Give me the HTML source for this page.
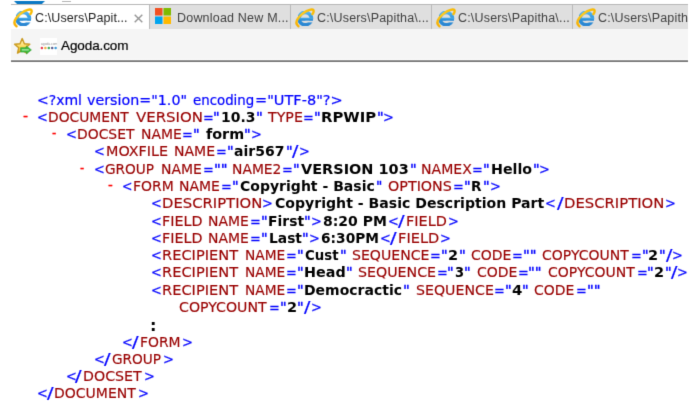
<!DOCTYPE html>
<html><head><meta charset="utf-8"><title>XML</title>
<style>
html,body{margin:0;padding:0;background:#fff;}
body{width:694px;height:407px;position:relative;overflow:hidden;font-family:"Liberation Sans",sans-serif;}
#page{position:absolute;left:0;top:0;width:694px;height:407px;background:#fff;filter:url(#soft);}
#chrome{position:absolute;left:11px;top:4px;width:677px;height:58px;}
#tabs{position:absolute;left:0;top:0;width:677px;height:25px;background:#dfdfdf;border-top:1px solid #b8b8b8;box-sizing:border-box;overflow:hidden;}
.tab{position:absolute;top:0;height:24px;box-sizing:border-box;border-left:1px solid #bababa;font-size:12.5px;color:#404040;white-space:pre;overflow:hidden;}
.tab .tx{position:absolute;top:6px;line-height:15px;will-change:transform;transform:translateZ(0);}
.tab .ic{position:absolute;top:3.6px;overflow:visible;}
.tab.act{background:#fff;border-left:none;color:#1e1e1e;}
#bm{position:absolute;left:0;top:25px;width:677px;height:29.6px;background:#f5f5f5;}
#bline{position:absolute;left:0;top:56px;width:677px;height:2.2px;background:linear-gradient(#b0b0b0,#808080 45%,#6c6c6c);}
#bmtx{-webkit-text-stroke:0.2px #000;will-change:transform;transform:translateZ(0);position:absolute;left:50px;top:9px;letter-spacing:-0.1px;font-size:13.5px;color:#000;line-height:16px;white-space:pre;}
#fav{position:absolute;left:29px;top:9px;width:17px;height:17px;background:#fff;}
#fav span{position:absolute;left:0.7px;top:4.4px;font-size:3.3px;line-height:4px;color:#909090;white-space:pre;will-change:transform;transform:translateZ(0);}
#fav i{position:absolute;top:8.9px;width:2.4px;height:2.4px;border-radius:50%;}
#xml{position:absolute;left:0;top:0;transform:translateZ(0);font-family:"DejaVu Sans","Liberation Sans",sans-serif;font-size:13.5px;line-height:17px;color:#000;}
.l{position:absolute;left:0;white-space:pre;height:17px;width:694px;}
.l span,.l b{position:absolute;top:0;transform-origin:0 50%;}
.m{color:#0000ff;-webkit-text-stroke:0.2px #0000ff;word-spacing:1.2px;}
.q{-webkit-text-stroke:0.35px #0000ff;}
.t{color:#990000;-webkit-text-stroke:0.15px #990000;word-spacing:1.2px;}
.d{color:#ff0000;-webkit-text-stroke:0.3px #ff0000;}
b{font-weight:bold;color:#000;}
</style></head><body>
<svg width="0" height="0" style="position:absolute">
 <defs>
  <filter id="soft" x="0" y="0" width="694" height="407" filterUnits="userSpaceOnUse" color-interpolation-filters="sRGB"><feConvolveMatrix order="3" kernelMatrix="0 1 0 1 6 1 0 1 0" divisor="10" edgeMode="duplicate" preserveAlpha="false"/></filter>
  <linearGradient id="eg" x1="0" y1="0" x2="0" y2="1"><stop offset="0" stop-color="#55b4ee"/><stop offset="0.5" stop-color="#2f95dc"/><stop offset="1" stop-color="#2a86d2"/></linearGradient>
  <linearGradient id="rg" x1="0" y1="1" x2="1" y2="0"><stop offset="0" stop-color="#f5ae00"/><stop offset="0.5" stop-color="#ffcc22"/><stop offset="1" stop-color="#f7b800"/></linearGradient>
  <clipPath id="ec"><circle cx="9.2" cy="9.6" r="8.1"/></clipPath>
  <symbol id="ie" viewBox="0 0 18 18" overflow="visible">
   <mask id="em"><rect x="-2" y="-2" width="24" height="24" fill="#fff"/><rect x="9.2" y="11.8" width="10" height="1.6" fill="#000"/></mask>
   <g mask="url(#em)">
    <circle cx="9.2" cy="9.6" r="6.25" fill="none" stroke="url(#eg)" stroke-width="3.6"/>
    <rect x="4" y="8.7" width="13" height="3.1" fill="url(#eg)"/>
   </g>
   <path d="M2.5 17.3 C0.2 15.6 -0.5 12.8 2.3 9 C5.1 5.2 9.6 2 13.7 0.8 C16.5 0 18 0.7 17.6 2.7 C17.4 3.6 17 4.4 16.4 5.1" fill="none" stroke="url(#rg)" stroke-width="2.4" stroke-linecap="round"/>
  </symbol>
 </defs>
</svg>
<div id="page">
<div id="top1" style="position:absolute;left:14px;top:0;width:31px;height:4px;background:#0a78c4;clip-path:polygon(0 25%,100% 25%,90% 100%,10% 100%);"></div>
<div style="position:absolute;left:62px;top:1px;width:9px;height:1px;background:#b4b4b4;"></div>
<div id="chrome">
 <div id="tabs">
  <div class="tab act" style="left:0;width:138px;"><svg class="ic" style="left:3px" width="18" height="18"><use href="#ie"/></svg><span class="tx" style="left:23.5px;letter-spacing:0.1px">C:\Users\Papit...</span><svg style="position:absolute;left:123px;top:9px" width="9" height="9" viewBox="0 0 9 9"><path d="M0.7 0.7 L8.3 8.3 M8.3 0.7 L0.7 8.3" stroke="#939393" stroke-width="1.35" fill="none"/></svg></div>
  <div class="tab" style="left:138px;width:141px;"><svg class="ic" style="left:5px;top:3px" width="16" height="16" viewBox="0 0 16 16"><rect x="0" y="0" width="7.5" height="7.5" fill="#f25022"/><rect x="8.5" y="0" width="7.5" height="7.5" fill="#7fba00"/><rect x="0" y="8.5" width="7.5" height="7.5" fill="#00a4ef"/><rect x="8.5" y="8.5" width="7.5" height="7.5" fill="#ffb900"/></svg><span class="tx" style="left:26.5px;letter-spacing:0.2px">Download New M...</span></div>
  <div class="tab" style="left:279px;width:141px;"><svg class="ic" style="left:5px" width="18" height="18"><use href="#ie"/></svg><span class="tx" style="left:25.5px;letter-spacing:0.18px">C:\Users\Papitha\...</span></div>
  <div class="tab" style="left:420px;width:141px;"><svg class="ic" style="left:5px" width="18" height="18"><use href="#ie"/></svg><span class="tx" style="left:25.5px;letter-spacing:0.18px">C:\Users\Papitha\...</span></div>
  <div class="tab" style="left:561px;width:116px;"><svg class="ic" style="left:4px" width="18" height="18"><use href="#ie"/></svg><span class="tx" style="left:25px;letter-spacing:0.18px">C:\Users\Papitha\...</span></div>
 </div>
 <div id="bm">
  <svg style="position:absolute;left:2px;top:8px" width="19" height="18" viewBox="0 0 19 18">
   <defs><linearGradient id="sg" x1="0" y1="0" x2="0" y2="1"><stop offset="0" stop-color="#fffbe0"/><stop offset="0.55" stop-color="#fbd95a"/><stop offset="1" stop-color="#eeb020"/></linearGradient></defs>
   <path d="M9.2 1.6 L11.4 6.7 L16.8 7.2 L12.7 10.8 L13.9 16.1 L9.2 13.3 L4.5 16.1 L5.7 10.8 L1.6 7.2 L7 6.7 Z" fill="url(#sg)" stroke="#c9991f" stroke-width="1.4" stroke-linejoin="round"/>
   <path d="M7.6 10.7 H13.4 V8.9 L18.4 12.9 L13.4 17 V15.1 H7.6 Z" fill="#3dbb3d" stroke="#2fa12f" stroke-width="0.6" stroke-linejoin="round"/>
   <path d="M8.8 12.9 H15.8" stroke="#c4f0bc" stroke-width="1.1" fill="none"/>
  </svg>
  <div id="fav"><span>agoda.com</span><svg style="position:absolute;left:0;top:0" width="17" height="17" viewBox="0 0 17 17"><circle cx="1.9" cy="10.1" r="1.25" fill="#e8384f"/><circle cx="5.4" cy="10.1" r="1.25" fill="#f0b040"/><circle cx="8.8" cy="10.1" r="1.25" fill="#40a860"/><circle cx="12.2" cy="10.1" r="1.25" fill="#5a5a8c"/><circle cx="15.6" cy="10.1" r="1.25" fill="#3a9ad8"/></svg></div>
  <span id="bmtx">Agoda.com</span>
 </div>
 <div id="bline"></div>
</div>
<div id="xml">
<div class="l" style="top:92.0px"><span class="m" style="left:36.9px;transform:scaleX(1.038)">&lt;?xml</span> <span class="m" style="left:86.9px;transform:scaleX(1.057)">version="1.0"</span> <span class="m" style="left:192.9px;transform:scaleX(0.988)">encoding</span><span class="m" style="left:254.9px;transform:scaleX(1.075)">="UTF-8"?&gt;</span></div>
<div class="l" style="top:109.0px"><span class="d" style="left:22.7px;transform:scaleX(1.040) translateY(-0.7px)">-</span> <span class="m" style="left:36.9px;transform:scaleX(0.956)">&lt;</span><span class="t" style="left:47.8px;transform:scaleX(1.024)">DOCUMENT</span> <span class="t" style="left:135.9px;transform:scaleX(1.109)">VERSION</span><span class="m" style="left:202.7px;transform:scaleX(0.956) scaleY(1.15)">=</span><span class="m q" style="left:213.3px;transform:scaleX(1.075)">"</span><b style="left:220.8px;transform:scaleX(1.034)">10.3</b><span class="m q" style="left:255.9px;transform:scaleX(1.100)">"</span> <span class="t" style="left:268.0px;transform:scaleX(1.053)">TYPE</span><span class="m" style="left:302.7px;transform:scaleX(0.956) scaleY(1.15)">=</span><span class="m q" style="left:314.2px;transform:scaleX(1.075)">"</span><b style="left:320.5px;transform:scaleX(1.102)">RPWIP</b><span class="m q" style="left:376.9px;transform:scaleX(1.075)">"</span><span class="m" style="left:383.4px;transform:scaleX(0.956)">&gt;</span></div>
<div class="l" style="top:126.0px"><span class="d" style="left:51.5px;transform:scaleX(0.880) translateY(-0.7px)">-</span> <span class="m" style="left:65.5px;transform:scaleX(0.967)">&lt;</span><span class="t" style="left:76.5px;transform:scaleX(1.030)">DOCSET</span> <span class="t" style="left:141.2px;transform:scaleX(1.032)">NAME</span><span class="m" style="left:182.2px;transform:scaleX(0.956) scaleY(1.15)">=</span><span class="m q" style="left:193.4px;transform:scaleX(1.075)">"</span> <b style="left:205.8px;transform:scaleX(1.063)">form</b><span class="m q" style="left:243.7px;transform:scaleX(1.075)">"</span><span class="m" style="left:250.5px;transform:scaleX(0.956)">&gt;</span></div>
<div class="l" style="top:143.0px"><span class="m" style="left:93.8px;transform:scaleX(0.956)">&lt;</span><span class="t" style="left:105.8px;transform:scaleX(1.063)">MOXFILE</span> <span class="t" style="left:173.9px;transform:scaleX(1.040)">NAME</span><span class="m" style="left:215.7px;transform:scaleX(0.956) scaleY(1.15)">=</span><span class="m q" style="left:226.6px;transform:scaleX(1.075)">"</span><b style="left:234.3px;transform:scaleX(1.038)">air567</b><span class="m q" style="left:285.5px;transform:scaleX(1.075)">"</span><span class="m" style="left:292.1px;transform:scaleX(1.400) translateY(0.5px) scaleY(1.17)">/</span><span class="m" style="left:298.6px;transform:scaleX(0.956)">&gt;</span></div>
<div class="l" style="top:161.0px"><span class="d" style="left:80.1px;transform:scaleX(0.860) translateY(-0.7px)">-</span> <span class="m" style="left:93.5px;transform:scaleX(0.956)">&lt;</span><span class="t" style="left:105.2px;transform:scaleX(1.013)">GROUP</span> <span class="t" style="left:160.8px;transform:scaleX(1.035)">NAME</span><span class="m" style="left:203.0px;transform:scaleX(0.956) scaleY(1.15)">=</span><span class="m q" style="left:214.3px;transform:scaleX(1.097)">""</span> <span class="t" style="left:232.3px;transform:scaleX(1.028)">NAME2</span><span class="m" style="left:282.4px;transform:scaleX(0.956) scaleY(1.15)">=</span><span class="m q" style="left:293.0px;transform:scaleX(1.075)">"</span><b style="left:300.7px;transform:scaleX(1.072)">VERSION 103</b><span class="m q" style="left:409.7px;transform:scaleX(1.075)">"</span> <span class="t" style="left:420.9px;transform:scaleX(1.042)">NAMEX</span><span class="m" style="left:472.2px;transform:scaleX(0.956) scaleY(1.15)">=</span><span class="m q" style="left:483.3px;transform:scaleX(1.075)">"</span><b style="left:490.5px;transform:scaleX(1.055)">Hello</b><span class="m q" style="left:532.6px;transform:scaleX(1.075)">"</span><span class="m" style="left:539.1px;transform:scaleX(0.956)">&gt;</span></div>
<div class="l" style="top:178.0px"><span class="d" style="left:108.3px;transform:scaleX(0.980) translateY(-0.7px)">-</span> <span class="m" style="left:122.4px;transform:scaleX(0.922)">&lt;</span><span class="t" style="left:133.0px;transform:scaleX(1.033)">FORM</span> <span class="t" style="left:179.0px;transform:scaleX(1.035)">NAME</span><span class="m" style="left:220.9px;transform:scaleX(0.956) scaleY(1.15)">=</span><span class="m q" style="left:231.5px;transform:scaleX(1.075)">"</span><b style="left:239.8px;transform:scaleX(1.039)">Copyright - Basic</b><span class="m q" style="left:375.7px;transform:scaleX(1.025)">"</span> <span class="t" style="left:388.0px;transform:scaleX(1.060)">OPTIONS</span><span class="m" style="left:453.1px;transform:scaleX(0.956) scaleY(1.15)">=</span><span class="m q" style="left:464.0px;transform:scaleX(1.075)">"</span><b style="left:471.3px;transform:scaleX(1.010)">R</b><span class="m q" style="left:482.7px;transform:scaleX(1.075)">"</span><span class="m" style="left:489.5px;transform:scaleX(0.956)">&gt;</span></div>
<div class="l" style="top:195.0px"><span class="m" style="left:151.2px;transform:scaleX(0.956)">&lt;</span><span class="t" style="left:161.8px;transform:scaleX(1.097)">DESCRIPTION</span><span class="m" style="left:262.2px;transform:scaleX(0.956)">&gt;</span><b style="left:275.3px;transform:scaleX(1.043)">Copyright - Basic Description Part</b><span class="m" style="left:545.0px;transform:scaleX(0.956)">&lt;</span><span class="m" style="left:556.9px;transform:scaleX(1.440) translateY(0.5px) scaleY(1.17)">/</span><span class="t" style="left:563.5px;transform:scaleX(1.098)">DESCRIPTION</span><span class="m" style="left:664.5px;transform:scaleX(0.956)">&gt;</span></div>
<div class="l" style="top:213.0px"><span class="m" style="left:151.2px;transform:scaleX(0.956)">&lt;</span><span class="t" style="left:161.8px;transform:scaleX(1.063)">FIELD</span> <span class="t" style="left:208.0px;transform:scaleX(1.032)">NAME</span><span class="m" style="left:250.0px;transform:scaleX(0.956) scaleY(1.15)">=</span><span class="m q" style="left:260.6px;transform:scaleX(1.075)">"</span><b style="left:267.9px;transform:scaleX(1.031)">First</b><span class="m q" style="left:304.4px;transform:scaleX(1.075)">"</span><span class="m" style="left:310.9px;transform:scaleX(0.956)">&gt;</span><b style="left:323.2px;transform:scaleX(1.036)">8:20 PM</b><span class="m" style="left:387.7px;transform:scaleX(0.956)">&lt;</span><span class="m" style="left:398.2px;transform:scaleX(1.440) translateY(0.5px) scaleY(1.17)">/</span><span class="t" style="left:405.7px;transform:scaleX(1.073)">FIELD</span><span class="m" style="left:448.2px;transform:scaleX(0.956)">&gt;</span></div>
<div class="l" style="top:230.0px"><span class="m" style="left:151.2px;transform:scaleX(0.956)">&lt;</span><span class="t" style="left:161.8px;transform:scaleX(1.063)">FIELD</span> <span class="t" style="left:208.0px;transform:scaleX(1.032)">NAME</span><span class="m" style="left:250.0px;transform:scaleX(0.956) scaleY(1.15)">=</span><span class="m q" style="left:260.9px;transform:scaleX(1.075)">"</span><b style="left:268.5px;transform:scaleX(1.024)">Last</b><span class="m q" style="left:302.1px;transform:scaleX(1.075)">"</span><span class="m" style="left:308.6px;transform:scaleX(0.956)">&gt;</span><b style="left:321.0px;transform:scaleX(1.020)">6:30PM</b><span class="m" style="left:379.9px;transform:scaleX(0.956)">&lt;</span><span class="m" style="left:390.1px;transform:scaleX(1.440) translateY(0.5px) scaleY(1.17)">/</span><span class="t" style="left:397.6px;transform:scaleX(1.082)">FIELD</span><span class="m" style="left:440.4px;transform:scaleX(0.956)">&gt;</span></div>
<div class="l" style="top:247.0px"><span class="m" style="left:151.2px;transform:scaleX(0.956)">&lt;</span><span class="t" style="left:162.1px;transform:scaleX(1.082)">RECIPIENT</span> <span class="t" style="left:244.6px;transform:scaleX(1.019)">NAME</span><span class="m" style="left:285.8px;transform:scaleX(0.956) scaleY(1.15)">=</span><span class="m q" style="left:296.7px;transform:scaleX(1.075)">"</span><b style="left:304.7px;transform:scaleX(0.987)">Cust</b><span class="m q" style="left:340.0px;transform:scaleX(1.075)">"</span> <span class="t" style="left:352.1px;transform:scaleX(1.044)">SEQUENCE</span><span class="m" style="left:430.0px;transform:scaleX(0.956) scaleY(1.15)">=</span><span class="m q" style="left:440.9px;transform:scaleX(1.075)">"</span><b style="left:448.1px;transform:scaleX(1.075)">2</b><span class="m q" style="left:458.5px;transform:scaleX(1.100)">"</span> <span class="t" style="left:470.8px;transform:scaleX(1.038)">CODE</span><span class="m" style="left:511.7px;transform:scaleX(0.956) scaleY(1.15)">=</span><span class="m q" style="left:522.6px;transform:scaleX(1.097)">""</span> <span class="t" style="left:542.1px;transform:scaleX(1.036)">COPYCOUNT</span><span class="m" style="left:631.0px;transform:scaleX(0.956) scaleY(1.15)">=</span><span class="m q" style="left:641.9px;transform:scaleX(1.075)">"</span><b style="left:648.4px;transform:scaleX(1.075)">2</b><span class="m q" style="left:659.2px;transform:scaleX(1.075)">"</span><span class="m" style="left:665.5px;transform:scaleX(1.400) translateY(0.5px) scaleY(1.17)">/</span><span class="m" style="left:672.0px;transform:scaleX(0.956)">&gt;</span></div>
<div class="l" style="top:264.0px"><span class="m" style="left:151.2px;transform:scaleX(0.956)">&lt;</span><span class="t" style="left:162.1px;transform:scaleX(1.082)">RECIPIENT</span> <span class="t" style="left:244.6px;transform:scaleX(1.019)">NAME</span><span class="m" style="left:285.8px;transform:scaleX(0.956) scaleY(1.15)">=</span><span class="m q" style="left:296.7px;transform:scaleX(1.075)">"</span><b style="left:303.6px;transform:scaleX(1.062)">Head</b><span class="m q" style="left:345.8px;transform:scaleX(1.075)">"</span> <span class="t" style="left:357.8px;transform:scaleX(1.052)">SEQUENCE</span><span class="m" style="left:436.7px;transform:scaleX(0.956) scaleY(1.15)">=</span><span class="m q" style="left:447.2px;transform:scaleX(1.075)">"</span><b style="left:454.9px;transform:scaleX(0.967)">3</b><span class="m q" style="left:464.3px;transform:scaleX(1.075)">"</span> <span class="t" style="left:476.6px;transform:scaleX(1.038)">CODE</span><span class="m" style="left:518.1px;transform:scaleX(0.956) scaleY(1.15)">=</span><span class="m q" style="left:528.4px;transform:scaleX(1.097)">""</span> <span class="t" style="left:547.9px;transform:scaleX(1.036)">COPYCOUNT</span><span class="m" style="left:636.5px;transform:scaleX(0.956) scaleY(1.15)">=</span><span class="m q" style="left:647.4px;transform:scaleX(1.075)">"</span><b style="left:653.9px;transform:scaleX(1.075)">2</b><span class="m q" style="left:664.5px;transform:scaleX(1.075)">"</span><span class="m" style="left:670.9px;transform:scaleX(1.400) translateY(0.5px) scaleY(1.17)">/</span><span class="m" style="left:677.4px;transform:scaleX(0.956)">&gt;</span></div>
<div class="l" style="top:282.0px"><span class="m" style="left:151.2px;transform:scaleX(0.956)">&lt;</span><span class="t" style="left:162.1px;transform:scaleX(1.082)">RECIPIENT</span> <span class="t" style="left:244.6px;transform:scaleX(1.019)">NAME</span><span class="m" style="left:285.8px;transform:scaleX(0.956) scaleY(1.15)">=</span><span class="m q" style="left:296.7px;transform:scaleX(1.075)">"</span><b style="left:303.7px;transform:scaleX(1.036)">Democractic</b><span class="m q" style="left:402.8px;transform:scaleX(1.100)">"</span> <span class="t" style="left:415.5px;transform:scaleX(1.049)">SEQUENCE</span><span class="m" style="left:493.9px;transform:scaleX(0.956) scaleY(1.15)">=</span><span class="m q" style="left:505.0px;transform:scaleX(1.075)">"</span><b style="left:512.1px;transform:scaleX(1.100)">4</b><span class="m q" style="left:522.3px;transform:scaleX(1.075)">"</span> <span class="t" style="left:534.3px;transform:scaleX(1.035)">CODE</span><span class="m" style="left:575.7px;transform:scaleX(0.956) scaleY(1.15)">=</span><span class="m q" style="left:586.9px;transform:scaleX(1.097)">""</span></div>
<div class="l" style="top:299.0px"><span class="t" style="left:179.0px;transform:scaleX(1.048)">COPYCOUNT</span><span class="m" style="left:268.8px;transform:scaleX(0.956) scaleY(1.15)">=</span><span class="m q" style="left:279.9px;transform:scaleX(1.075)">"</span><b style="left:286.6px;transform:scaleX(1.075)">2</b><span class="m q" style="left:297.2px;transform:scaleX(1.075)">"</span><span class="m" style="left:304.1px;transform:scaleX(1.400) translateY(0.5px) scaleY(1.17)">/</span><span class="m" style="left:310.6px;transform:scaleX(0.956)">&gt;</span></div>
<div class="l" style="top:316.0px"><b style="left:149.9px;transform:scaleX(1.200) translateY(1px) scale(1.0,1.22)">:</b></div>
<div class="l" style="top:334.0px"><span class="m" style="left:122.2px;transform:scaleX(0.956)">&lt;</span><span class="m" style="left:131.9px;transform:scaleX(1.440) translateY(0.5px) scaleY(1.17)">/</span><span class="t" style="left:139.5px;transform:scaleX(1.030)">FORM</span><span class="m" style="left:181.8px;transform:scaleX(0.967)">&gt;</span></div>
<div class="l" style="top:351.0px"><span class="m" style="left:93.9px;transform:scaleX(0.956)">&lt;</span><span class="m" style="left:103.6px;transform:scaleX(1.440) translateY(0.5px) scaleY(1.17)">/</span><span class="t" style="left:112.2px;transform:scaleX(1.013)">GROUP</span><span class="m" style="left:162.5px;transform:scaleX(0.967)">&gt;</span></div>
<div class="l" style="top:368.0px"><span class="m" style="left:65.7px;transform:scaleX(0.956)">&lt;</span><span class="m" style="left:75.1px;transform:scaleX(1.440) translateY(0.5px) scaleY(1.17)">/</span><span class="t" style="left:82.9px;transform:scaleX(1.053)">DOCSET</span><span class="m" style="left:143.5px;transform:scaleX(0.956)">&gt;</span></div>
<div class="l" style="top:385.0px"><span class="m" style="left:37.2px;transform:scaleX(0.956)">&lt;</span><span class="m" style="left:46.8px;transform:scaleX(1.440) translateY(0.5px) scaleY(1.17)">/</span><span class="t" style="left:54.2px;transform:scaleX(1.037)">DOCUMENT</span><span class="m" style="left:137.7px;transform:scaleX(0.967)">&gt;</span></div>
</div>
</div>
</body></html>
